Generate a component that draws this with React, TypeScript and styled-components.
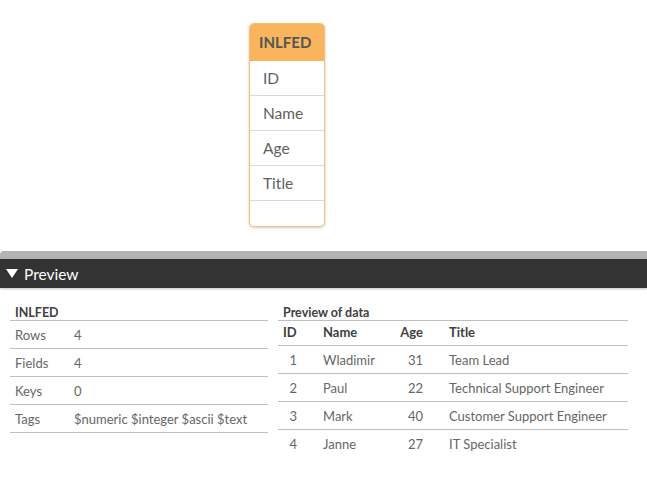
import React from "react";
import styled, { createGlobalStyle } from "styled-components";

const GlobalStyle = createGlobalStyle`
  html, body {
    margin: 0;
    padding: 0;
    background: #ffffff;
    font-family: Lato, "Open Sans", sans-serif;
  }
`;

const Page = styled.div`
  width: 647px;
  height: 481px;
  display: flex;
  flex-direction: column;
  overflow: hidden;
`;

const Canvas = styled.div`
  position: relative;
  height: 251px;
  flex: none;
`;

const TableCard = styled.div<{ x: number; y: number }>`
  position: absolute;
  left: ${p => p.x}px;
  top: ${p => p.y}px;
  width: 74px;
  border: 1px solid #f8bf72;
  border-radius: 5px;
  background: #ffffff;
  box-shadow: 0 1px 3px rgba(0, 0, 0, 0.2);
  overflow: hidden;
`;

const CardHeader = styled.div`
  height: 37px;
  background: #f9b45e;
  color: #555555;
  font-weight: 700;
  font-size: 15px;
  display: flex;
  align-items: center;
  padding-left: 9px;
  padding-bottom: 2px;
  box-sizing: border-box;
`;

const FieldRow = styled.div`
  height: 34px;
  border-bottom: 1px solid #d9d9d9;
  color: #5f5f5f;
  font-size: 15.5px;
  display: flex;
  align-items: center;
  padding-left: 13px;
  &:last-child {
    border-bottom: none;
    height: 25px;
  }
`;

const Splitter = styled.div`
  height: 8px;
  background: #b3b3b3;
  border-top-left-radius: 4px;
  flex: none;
`;

const PanelHeader = styled.div`
  height: 29px;
  background: #333333;
  color: #ffffff;
  font-size: 15.5px;
  display: flex;
  align-items: center;
  padding-left: 6px;
  gap: 5px;
  box-shadow: 0 1px 2px rgba(0, 0, 0, 0.25);
  flex: none;
`;

const Caret = styled.span`
  width: 0;
  height: 0;
  border-left: 6px solid transparent;
  border-right: 6px solid transparent;
  border-top: 9px solid #ffffff;
  margin-right: 1px;
`;

const Body = styled.div`
  display: flex;
  padding: 17px 0 0 10px;
  gap: 10px;
`;

const Section = styled.div<{ w: number }>`
  width: ${p => p.w}px;
  color: #595959;
`;

const SectionTitle = styled.div`
  font-size: 12.5px;
  font-weight: 700;
  color: #404040;
  padding-left: 5px;
  height: 15px;
  line-height: 15px;
  border-bottom: 1px solid #bfbfbf;
`;

const InfoRow = styled.div`
  display: grid;
  grid-template-columns: 59px 1fr;
  height: 27px;
  align-items: center;
  padding-left: 5px;
  font-size: 13px;
  color: #666666;
  border-bottom: 1px solid #bfbfbf;
`;

const DataGrid = styled.div`
  display: grid;
  grid-template-columns: 40px 60px 50px 1fr;
`;

const Cell = styled.div<{ right?: boolean; head?: boolean; last?: boolean; pl?: number; pr?: number }>`
  box-sizing: border-box;
  height: ${p => (p.head ? 25 : 28)}px;
  display: flex;
  align-items: center;
  justify-content: ${p => (p.right ? "flex-end" : "flex-start")};
  padding-left: ${p => p.pl ?? 5}px;
  padding-right: ${p => p.pr ?? 0}px;
  padding-bottom: ${p => (p.head ? 2 : 0)}px;
  font-size: 13px;
  font-weight: ${p => (p.head ? 700 : 400)};
  color: ${p => (p.head ? "#404040" : "#666666")};
  border-bottom: ${p => (p.last ? "none" : "1px solid #bfbfbf")};
  font-variant-numeric: tabular-nums;
`;

const fields = ["ID", "Name", "Age", "Title", ""];

const info = [
  ["Rows", "4"],
  ["Fields", "4"],
  ["Keys", "0"],
  ["Tags", "$numeric $integer $ascii $text"],
];

const rows = [
  ["1", "Wladimir", "31", "Team Lead"],
  ["2", "Paul", "22", "Technical Support Engineer"],
  ["3", "Mark", "40", "Customer Support Engineer"],
  ["4", "Janne", "27", "IT Specialist"],
];

export default function App() {
  return (
    <Page>
      <GlobalStyle />
      <Canvas>
        <TableCard x={249} y={23}>
          <CardHeader>INLFED</CardHeader>
          {fields.map((f, i) => (
            <FieldRow key={i}>{f}</FieldRow>
          ))}
        </TableCard>
      </Canvas>
      <Splitter />
      <PanelHeader>
        <Caret />
        Preview
      </PanelHeader>
      <Body>
        <Section w={258}>
          <SectionTitle>INLFED</SectionTitle>
          {info.map(([k, v]) => (
            <InfoRow key={k}>
              <span>{k}</span>
              <span>{v}</span>
            </InfoRow>
          ))}
        </Section>
        <Section w={350}>
          <SectionTitle>Preview of data</SectionTitle>
          <DataGrid>
            <Cell head>ID</Cell>
            <Cell head>Name</Cell>
            <Cell head right pl={0} pr={5}>Age</Cell>
            <Cell head pl={21}>Title</Cell>
            {rows.map((r, i) => {
              const last = i === rows.length - 1;
              return (
                <React.Fragment key={r[0]}>
                  <Cell right pl={0} pr={21} last={last}>{r[0]}</Cell>
                  <Cell last={last}>{r[1]}</Cell>
                  <Cell right pl={0} pr={5} last={last}>{r[2]}</Cell>
                  <Cell pl={21} last={last}>{r[3]}</Cell>
                </React.Fragment>
              );
            })}
          </DataGrid>
        </Section>
      </Body>
    </Page>
  );
}
